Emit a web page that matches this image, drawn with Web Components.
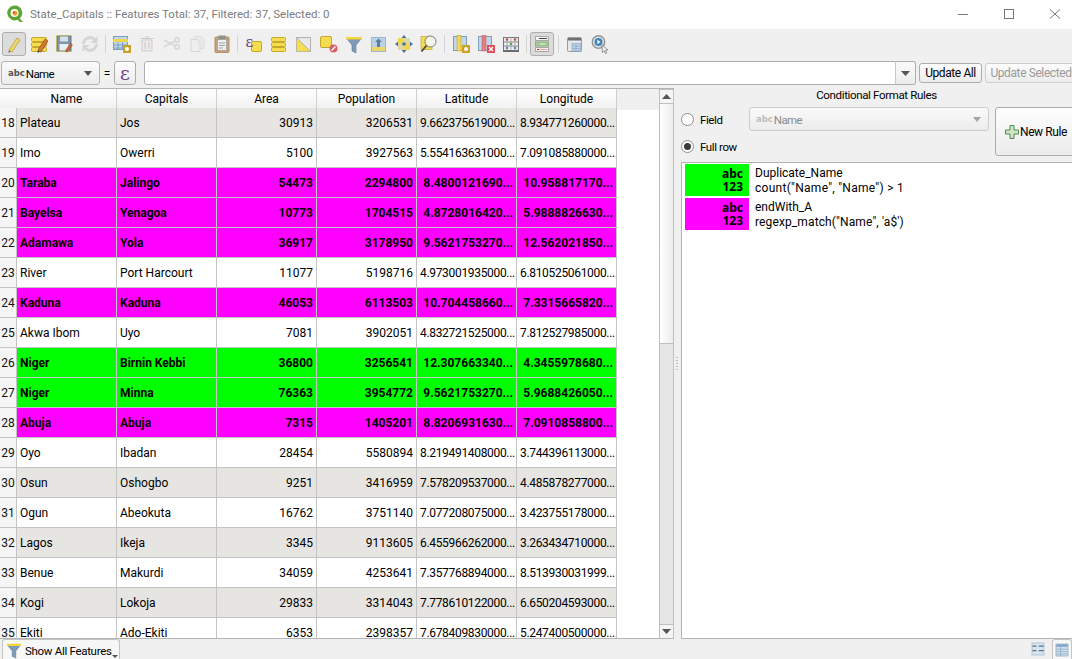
<!DOCTYPE html>
<html>
<head>
<meta charset="utf-8">
<title>State_Capitals</title>
<style>
  html, body { margin: 0; height: 100%; overflow: hidden; background: #f0f0f0; }
  body { font: 12px Roboto, "Liberation Sans", sans-serif; color: #000; }
</style>
</head>
<body>
<qgis-window>
  <title-bar></title-bar>
  <tool-bar></tool-bar>
  <filter-row></filter-row>
  <main-area>
    <attr-table></attr-table>
    <format-panel></format-panel>
  </main-area>
  <status-bar></status-bar>
</qgis-window>

<script>
// little toolbar icons, all on a 20x20 canvas
const pencil = (c = "#d9752f") => `<path d="M9 17l-1-1 7-11 3 2-7 11z" fill="${c}" stroke="#7d5230" stroke-width=".7"/><path d="M8 16l-.5 3 2-1.200z" fill="#333"/>`;
const ICONS = {
  edit: `<path d="M6 17l-1-1 8-12 3 2-8 12z" fill="#ecd568" stroke="#b7a348" stroke-width=".8"/><path d="M5 16l-.7 3 2.400-1.200z" fill="#77703a"/>`,
  multi: `<g fill="#f6dc4f" stroke="#c6a72b"><rect x="1.500" y="3.500" width="15" height="4" rx="1"/><rect x="1.500" y="8.500" width="15" height="4" rx="1"/><rect x="1.500" y="13.500" width="15" height="4" rx="1"/></g>${pencil()}`,
  save: `<rect x="1" y="1" width="16" height="17" rx="1" fill="#efe05a"/><rect x="2" y="2" width="14" height="15" fill="#7e94ad" stroke="#5d6f84" stroke-width=".7"/><rect x="5" y="2.500" width="8" height="5" fill="#d7dfe7"/><rect x="4.500" y="10" width="9" height="6.500" fill="#e9eef3"/><path d="M11 18l-.5-1.500 5-7 2 1.400-5 7z" fill="#c8643a" stroke="#7d5230" stroke-width=".5"/>`,
  reload: `<g fill="none" stroke="#d3d6d6" stroke-width="3"><path d="M3.500 10a6.500 6.500 0 0 1 11-4.500"/><path d="M16.500 10a6.500 6.500 0 0 1-11 4.500"/></g><path d="M17.500 2v7h-7zM2.500 18v-7h7z" fill="#d3d6d6"/>`,
  newfield: `<rect x="1.500" y="2.500" width="14" height="13" fill="#c3d7ea" stroke="#7f9fc0"/><rect x="1" y="5" width="15" height="3" fill="#f0d84e"/><path d="M2 11h13M2 14h13M6 8v8M10.500 8v8" stroke="#7f9fc0"/><rect x="11" y="11" width="8" height="8" fill="#c9a227"/><circle cx="15" cy="15" r="2" fill="#fff"/>`,
  trash: `<path d="M5 6h10v11H5z" fill="#ececec" stroke="#d3c8c8"/><path d="M3.500 4.500h13M8 3h4M8 8v7M12 8v7" stroke="#d3c8c8" stroke-width="1.200"/>`,
  cut: `<g fill="none" stroke="#d6d6d6" stroke-width="1.500"><path d="M2 6l11 6M2 13l11-6"/><circle cx="15" cy="6" r="2.200"/><circle cx="15" cy="13" r="2.200"/></g>`,
  copy: `<path d="M8 2.500h6l3 3v9H8z" fill="#eaeaea" stroke="#dcdcdc"/><path d="M4 5.500h6l3 3v9H4z" fill="#eeeeee" stroke="#d6d6d6"/>`,
  paste: `<rect x="3" y="3" width="14" height="15.500" rx="1" fill="#c9a37a" stroke="#b48e66"/><rect x="5.500" y="5.500" width="9" height="11" fill="#eef0f2" stroke="#8b8f93" stroke-width=".6"/><rect x="6.500" y="1.500" width="7" height="3.500" fill="#8f8f8f"/><path d="M7 9h6M7 11.500h6M7 14h4" stroke="#9aa0a5"/>`,
  selexpr: `<rect x="7.500" y="7.500" width="10" height="10" rx="1.500" fill="#f6dc4f" stroke="#c6a72b"/><text x="1.500" y="13" font-family="'DejaVu Serif',serif" font-size="15" fill="#6b3f80">ε</text>`,
  selall: `<g fill="#f6dc4f" stroke="#c6a72b"><rect x="2.500" y="3.500" width="14" height="4" rx="1"/><rect x="2.500" y="8.500" width="14" height="4" rx="1"/><rect x="2.500" y="13.500" width="14" height="4" rx="1"/></g>`,
  invert: `<rect x="2.500" y="3.500" width="14" height="14" fill="#f6dc4f" stroke="#bdb9a0"/><path d="M2.500 3.500h14v14z" fill="#e9e9e9" stroke="#b0b0b0"/>`,
  deselect: `<rect x="1.500" y="2.500" width="11" height="11" rx="1.500" fill="#f6dc4f" stroke="#c6a72b"/><circle cx="14.500" cy="14.500" r="4" fill="#d9606a"/><path d="M12.500 16.500l4-4" stroke="#fff" stroke-width="1.200"/>`,
  funnel: `<path d="M3 5h14l-5 6v8l-4-2v-6z" fill="#7d9bb6" stroke="#5e7a94" stroke-width=".6"/><rect x="2" y="3" width="16" height="2.500" fill="#f2d83e"/>`,
  movetop: `<rect x="2.500" y="3.500" width="14" height="14" fill="#bcd2e6" stroke="#9db6cc"/><rect x="3" y="13" width="13" height="4" fill="#ecd868"/><path d="M9.500 4.500l3.500 3.500h-2v5h-3v-5h-2z" fill="#5b7f9f"/>`,
  pan: `<g fill="#f0d84e"><rect x="4" y="4" width="6" height="6"/><rect x="10" y="10" width="6" height="6"/><rect x="10" y="4" width="6" height="6" fill="#dcd9a8"/><rect x="4" y="10" width="6" height="6" fill="#dcd9a8"/></g><g fill="#4d72a0"><path d="M10 1l2.500 3h-5zM10 19l2.500-3h-5zM1 10l3-2.500v5zM19 10l-3-2.500v5z"/><circle cx="10" cy="10" r="1.800"/></g>`,
  zoom: `<rect x="2" y="2.500" width="11" height="13" fill="#f3dd56" stroke="#c6a72b" stroke-width=".7"/><circle cx="11.500" cy="7.500" r="5.500" fill="#f7f7f5" fill-opacity=".9" stroke="#77797b" stroke-width="1"/><path d="M7.500 11.500l-5 6" stroke="#50453a" stroke-width="1.800"/>`,
  addfield: `<rect x="2.500" y="2.500" width="13" height="14" fill="#c3d7ea" stroke="#7f9fc0"/><rect x="6" y="1.500" width="4" height="15.500" fill="#eed85d" stroke="#c6a72b" stroke-width=".6"/><rect x="11" y="11" width="8" height="8" fill="#c9a227"/><circle cx="15" cy="15" r="2" fill="#fff"/>`,
  delfield: `<rect x="2.500" y="2.500" width="13" height="14" fill="#c3d7ea" stroke="#7f9fc0"/><rect x="6" y="1.500" width="4" height="15.500" fill="#e17f80" stroke="#c96568" stroke-width=".6"/><rect x="11" y="11" width="8" height="8" fill="#df4d58"/><path d="M13 13l4 4M17 13l-4 4" stroke="#fff" stroke-width="1.300"/>`,
  calc: `<rect x="2.500" y="3.500" width="15" height="13" fill="#eef0ef" stroke="#777"/><path d="M3 8h14M3 12h14" stroke="#8a8a8a"/><path d="M6 3v14M10 3v14M14 3v14" stroke="#9a9a9a" stroke-width=".7"/><circle cx="6" cy="5.500" r="1.300" fill="#c95050"/><circle cx="14" cy="5.500" r="1.300" fill="#c95050"/><circle cx="10" cy="10" r="1.300" fill="#59a860"/><circle cx="6" cy="14" r="1.300" fill="#5b8fc4"/><circle cx="14" cy="14" r="1.300" fill="#5b8fc4"/><rect x="2" y="16.500" width="16" height="1.500" fill="#666"/>`,
  format: `<rect x="3.500" y="2.500" width="13" height="4" fill="#f4f4f4" stroke="#a8a8a8"/><path d="M7 4.500h8" stroke="#444"/><rect x="3.500" y="8" width="13" height="4" fill="#a4cf9a" stroke="#86ad7d"/><path d="M8 10h5" stroke="#e8f4e4"/><rect x="3.500" y="13.500" width="13" height="4" fill="#f4f4f4" stroke="#a8a8a8"/><path d="M5 15.500h2" stroke="#d22"/><path d="M7 15.500h8" stroke="#e9a0a0"/>`,
  dock: `<rect x="2.500" y="3.500" width="14" height="14" rx="1" fill="#e6e8ea" stroke="#9a9ea2"/><rect x="3" y="4" width="13" height="2.500" fill="#6d6f72"/><rect x="7" y="9.500" width="9" height="7.500" fill="#bcd2e6" stroke="#8eaac4" stroke-width=".7"/><path d="M7 12h9M7 14.500h9M11 10v7" stroke="#8eaac4" stroke-width=".7"/>`,
  action: `<circle cx="8.500" cy="8" r="6.200" fill="#e4e6e8" stroke="#8f9396" stroke-width="1.400"/><circle cx="8.500" cy="8" r="4" fill="#3f83b8"/><path d="M7.300 5.800l3.300 2.200-3.300 2.200z" fill="#fff"/><path d="M12 11l6 5-2.600.3 1.300 2.700-1.300.5-1.300-2.700-1.700 1.700z" fill="#f4f4f4" stroke="#6d6d6d" stroke-width=".7"/>`,
  tableform: `<rect x="2.500" y="2.500" width="15" height="15" fill="#d8e4ef" stroke="#a9bfd4"/><path d="M3 6.500h5M3 12h5M11 6.500h6M11 12h6" stroke="#55718e" stroke-width="1.500"/>`,
  tableview: `<rect x="2.500" y="2.500" width="15" height="15" fill="#d3e2f0" stroke="#8eaac4"/><rect x="3" y="3" width="14" height="3" fill="#7fa4c8"/><path d="M3 9h14M3 12h14M3 15h14M8 6v11" stroke="#8eaac4"/>`,
};

class TitleBar extends HTMLElement {
  constructor() {
    super();
    this.attachShadow({ mode: "open" }).innerHTML = `
      <style>
        :host { display: flex; align-items: center; height: 29px; box-sizing: border-box; padding-bottom: 2px; background: #fff; color: #7d7d7d; font-size: 11.5px; overflow: hidden; }
        .logo { margin: 0 7px 0 6px; width: 17px; height: 17px; flex: none; }
        .title { flex: 1; }
        .ctrl { width: 46px; height: 27px; display: grid; place-items: center; flex: none; }
        .ctrl:last-child { margin-right: -6px; }
      </style>
      <svg class="logo" viewBox="1 1 16 16">
        <path d="M9 1.500a7 7 0 1 0 3 13.400l2 2.100h3l-3-3.400A7 7 0 0 0 9 1.500z" fill="#5da533"/>
        <circle cx="9" cy="8.500" r="3.800" fill="#fff"/>
        <circle cx="9.500" cy="8.800" r="2.300" fill="#eda02c"/>
        <circle cx="8.500" cy="8" r="1" fill="#d5432e"/>
      </svg>
      <span class="title">State_Capitals :: Features Total: 37, Filtered: 37, Selected: 0</span>
      <span class="ctrl"><svg width="12" height="12"><path d="M1 6.500h10" stroke="#777"/></svg></span>
      <span class="ctrl"><svg width="12" height="12"><rect x="1.500" y="1.500" width="9" height="9" fill="none" stroke="#777"/></svg></span>
      <span class="ctrl"><svg width="12" height="12"><path d="M1 1.500l10 9M11 1.500l-10 9" stroke="#777"/></svg></span>
    `;
  }
}

class ToolIcon extends HTMLElement {
  static get observedAttributes() { return ["name"]; }
  constructor() {
    super();
    this.attachShadow({ mode: "open" }).innerHTML = `
      <style>
        :host { display: grid; place-items: center; width: 25px; height: 25px; box-sizing: border-box; flex: none; }
        :host([active]) { background: #dcdcdc; border: 1px solid #adadad; border-radius: 3px; width: 24px; height: 24px; margin-right: 1px; }
        svg { width: 20px; height: 20px; display: block; }
      </style>
      <svg viewBox="0 0 20 20"></svg>
    `;
  }
  attributeChangedCallback(attr, _, value) {
    if (attr === "name") this.shadowRoot.querySelector("svg").innerHTML = ICONS[value] || "";
  }
}

class ToolBar extends HTMLElement {
  constructor() {
    super();
    const groups = [
      ["edit", "multi", "save", "reload"],
      ["newfield", "trash", "cut", "copy", "paste"],
      ["selexpr", "selall", "invert", "deselect", "funnel", "movetop", "pan", "zoom"],
      ["addfield", "delfield", "calc"],
      ["format"],
      ["dock", "action"],
    ];
    const html = groups.map(g =>
      g.map(n => `<tool-icon name="${n}" ${n === "edit" || n === "format" ? "active" : ""}></tool-icon>`).join("")
    ).join(`<i></i>`);
    this.attachShadow({ mode: "open" }).innerHTML = `
      <style>
        :host { display: flex; align-items: center; height: 32px; padding-left: 2px; padding-bottom: 2px; box-sizing: border-box; background: #f0f0f0; }
        i { width: 1px; height: 18px; margin: 0 3px; background: #d4d4d4; flex: none; }
      </style>
      ${html}
    `;
  }
}

class ComboBox extends HTMLElement {
  constructor() {
    super();
    this.attachShadow({ mode: "open" }).innerHTML = `
      <style>
        :host { display: flex; align-items: center; box-sizing: border-box; border: 1px solid #b4b4b4; border-radius: 3px; background: linear-gradient(#fafafa, #ececec); padding: 1px 0 0 6px; flex: none; font-size: 11.5px; letter-spacing: -.6px; }
        :host([disabled]) { color: #8a8a8a; border-color: #cdcdcd; }
        b { font: bold 8.500px "DejaVu Sans", sans-serif; letter-spacing: 0; color: #555; margin-right: 1px; position: relative; top: -1px; }
        :host([disabled]) b { color: #bdbdbd; }
        span { flex: 1; }
        svg { margin-right: 7px; }
      </style>
      <b>abc</b><span><slot></slot></span>
      <svg width="8" height="5"><path d="M0 0h8L4 5z" fill="#555" fill-opacity="${this.hasAttribute("disabled") ? ".5" : "1"}"/></svg>
    `;
  }
}

class PushButton extends HTMLElement {
  constructor() {
    super();
    this.attachShadow({ mode: "open" }).innerHTML = `
      <style>
        :host { display: flex; align-items: center; justify-content: center; box-sizing: border-box; border: 1px solid #adadad; border-radius: 3px; background: linear-gradient(#fdfdfd, #ececec); white-space: nowrap; flex: none; letter-spacing: -.4px; }
        :host([disabled]) { color: #9a9a9a; border-color: #cfcfcf; }
      </style>
      <slot></slot>
    `;
  }
}

class FilterRow extends HTMLElement {
  constructor() {
    super();
    this.attachShadow({ mode: "open" }).innerHTML = `
      <style>
        :host { display: flex; align-items: flex-start; height: 27px; background: #f0f0f0; overflow: hidden; }
        combo-box { width: 99px; height: 24px; margin-left: 1px; }
        .eq { width: 14px; text-align: center; line-height: 26px; flex: none; }
        .eps { width: 22px; height: 24px; font: 19px "DejaVu Serif", serif; color: #6b3f80; letter-spacing: 0; }
        .input { width: 750px; height: 22px; margin-left: 8px; background: #fff; border: 1px solid #adadad; border-radius: 3px 0 0 3px; flex: none; }
        .drop { width: 19px; height: 22px; border: 1px solid #adadad; border-left-color: #c8c8c8; border-radius: 0 3px 3px 0; display: grid; place-items: center; background: linear-gradient(#fafafa, #ececec); margin-left: -1px; flex: none; }
        .all { width: 63px; height: 20px; margin: 2px 3px 0 3px; }
        .sel { width: 92px; height: 20px; margin-top: 2px; }
      </style>
      <combo-box>Name</combo-box>
      <span class="eq">=</span>
      <push-button class="eps">ε</push-button>
      <div class="input"></div>
      <div class="drop"><svg width="9" height="5"><path d="M0 0h9L4.500 5z" fill="#555"/></svg></div>
      <push-button class="all">Update All</push-button>
      <push-button class="sel" disabled>Update Selected</push-button>
    `;
  }
}

class TableRow extends HTMLElement {
  static get observedAttributes() { return ["data"]; }
  constructor() {
    super();
    this.attachShadow({ mode: "open" }).innerHTML = `
      <style>
        :host { display: grid; grid-template-columns: 17px repeat(6, 100px); height: 30px; flex: none; }
        :host([tone="grey"]) div:not(.n) { background: #e7e5e2; }
        :host([tone="white"]) div:not(.n) { background: #fff; }
        :host([tone="grey"]) .long, :host([tone="white"]) .long { letter-spacing: -.32px; }
        :host([tone="magenta"]) div:not(.n) { background: #f0f; font-weight: bold; }
        :host([tone="green"]) div:not(.n) { background: #0f0; font-weight: bold; }
        div { box-sizing: border-box; border-right: 1px solid #c4c4c4; border-bottom: 1px solid #c4c4c4; padding: 0 3px; line-height: 30px; white-space: nowrap; overflow: hidden; }
        .n { background: #f5f5f5; padding: 0; text-align: center; color: #111; }
        .r { text-align: right; }
      </style>
    `;
  }
  attributeChangedCallback(attr, _, value) {
    if (attr !== "data") return;
    const cells = value.split("|");
    cells.forEach((text, i) => {
      const cell = document.createElement("div");
      cell.textContent = text;
      if (i === 0) cell.className = "n";
      if (i > 2) cell.className = "r";
      if (i > 4) cell.className = "r long";
      this.shadowRoot.appendChild(cell);
    });
  }
}

class VScroll extends HTMLElement {
  constructor() {
    super();
    this.attachShadow({ mode: "open" }).innerHTML = `
      <style>
        :host { display: flex; flex-direction: column; width: 15px; box-sizing: border-box; border: 1px solid #c0c0c0; border-bottom: 0; background: #e6e6e6; flex: none; }
        .btn { height: 13px; display: grid; place-items: center; background: #f5f5f5; flex: none; }
        .up { border-bottom: 1px solid #c0c0c0; }
        .down { border-top: 1px solid #c0c0c0; }
        .thumb { height: 239px; background: linear-gradient(90deg, #fff, #ececec); border-bottom: 1px solid #bdbdbd; flex: none; }
        .rest { flex: 1; }
      </style>
      <div class="btn up"><svg width="9" height="5"><path d="M0 5h9L4.500 0z" fill="#555"/></svg></div>
      <div class="thumb"></div>
      <div class="rest"></div>
      <div class="btn down"><svg width="9" height="5"><path d="M0 0h9L4.500 5z" fill="#555"/></svg></div>
    `;
  }
}

const ROWS = [
  "18|Plateau|Jos|30913|3206531|9.662375619000...|8.934771260000...|grey",
  "19|Imo|Owerri|5100|3927563|5.554163631000...|7.091085880000...|white",
  "20|Taraba|Jalingo|54473|2294800|8.4800121690...|10.958817170...|magenta",
  "21|Bayelsa|Yenagoa|10773|1704515|4.8728016420...|5.9888826630...|magenta",
  "22|Adamawa|Yola|36917|3178950|9.5621753270...|12.562021850...|magenta",
  "23|River|Port Harcourt|11077|5198716|4.973001935000...|6.810525061000...|white",
  "24|Kaduna|Kaduna|46053|6113503|10.704458660...|7.3315665820...|magenta",
  "25|Akwa Ibom|Uyo|7081|3902051|4.832721525000...|7.812527985000...|white",
  "26|Niger|Birnin Kebbi|36800|3256541|12.307663340...|4.3455978680...|green",
  "27|Niger|Minna|76363|3954772|9.5621753270...|5.9688426050...|green",
  "28|Abuja|Abuja|7315|1405201|8.8206931630...|7.0910858800...|magenta",
  "29|Oyo|Ibadan|28454|5580894|8.219491408000...|3.744396113000...|white",
  "30|Osun|Oshogbo|9251|3416959|7.578209537000...|4.485878277000...|grey",
  "31|Ogun|Abeokuta|16762|3751140|7.077208075000...|3.423755178000...|white",
  "32|Lagos|Ikeja|3345|9113605|6.455966262000...|3.263434710000...|grey",
  "33|Benue|Makurdi|34059|4253641|7.357768894000...|8.513930031999...|white",
  "34|Kogi|Lokoja|29833|3314043|7.778610122000...|6.650204593000...|grey",
  "35|Ekiti|Ado-Ekiti|6353|2398357|7.678409830000...|5.247400500000...|white",
];

class AttrTable extends HTMLElement {
  constructor() {
    super();
    const heads = ["Name", "Capitals", "Area", "Population", "Latitude", "Longitude"];
    this.attachShadow({ mode: "open" }).innerHTML = `
      <style>
        :host { display: flex; width: 674px; box-sizing: border-box; border-top: 1px solid #b4b4b4; border-bottom: 1px solid #b4b4b4; height: 551px; flex: none; }
        .grid { flex: 1; display: flex; flex-direction: column; overflow: hidden; background: #fff; min-width: 0; }
        .head { display: grid; grid-template-columns: 17px repeat(6, 100px) 1fr; height: 19px; flex: none; background: #f0f0f0; }
        .head span { box-sizing: border-box; border-right: 1px solid #cfcfcf; border-bottom: 1px solid #b4b4b4; text-align: center; line-height: 20px; background: linear-gradient(#fff, #f1f1f1); }
        .head span.corner { border-right: 0; }
        .head span.fill { border: 0; background: #f0f0f0; }
        .rows { flex: 1; overflow: hidden; }
        .inner { display: flex; flex-direction: column; width: 617px; }
      </style>
      <div class="grid">
        <div class="head"><span class="corner"></span>${heads.map(h => `<span>${h}</span>`).join("")}<span class="fill"></span></div>
        <div class="rows"><div class="inner"></div></div>
      </div>
      <v-scroll></v-scroll>
    `;
    const inner = this.shadowRoot.querySelector(".inner");
    ROWS.forEach(line => {
      const parts = line.split("|");
      const row = document.createElement("table-row");
      row.setAttribute("tone", parts.pop());
      row.setAttribute("data", parts.join("|"));
      inner.appendChild(row);
    });
  }
}

class RadioOption extends HTMLElement {
  constructor() {
    super();
    this.attachShadow({ mode: "open" }).innerHTML = `
      <style>
        :host { display: flex; align-items: center; gap: 6px; height: 14px; font-size: 11.5px; letter-spacing: -.4px; }
        i { width: 13px; height: 13px; box-sizing: border-box; border: 1px solid #8e8e8e; border-radius: 50%; background: #fff; display: grid; place-items: center; flex: none; }
        :host([checked]) i::after { content: ""; width: 7px; height: 7px; border-radius: 50%; background: #3a3a3a; }
        span { position: relative; top: 1px; }
      </style>
      <i></i><span><slot></slot></span>
    `;
  }
}

class RuleItem extends HTMLElement {
  constructor() {
    super();
    this.attachShadow({ mode: "open" }).innerHTML = `
      <style>
        :host { display: flex; align-items: center; gap: 6px; height: 32px; margin-bottom: 2px; }
        .swatch { width: 64px; height: 32px; background: var(--swatch); font: bold 12px/13px "Noto Sans", sans-serif; text-align: right; padding: 3px 6px 0 0; box-sizing: border-box; flex: none; }
        .text { line-height: 15px; white-space: nowrap; padding-top: 2px; }
      </style>
      <div class="swatch">abc<br>123</div>
      <div class="text"><slot name="rule-name"></slot><br><slot name="rule-expr"></slot></div>
    `;
  }
}

class FormatPanel extends HTMLElement {
  constructor() {
    super();
    this.attachShadow({ mode: "open" }).innerHTML = `
      <style>
        :host { display: flex; flex-direction: column; flex: 1; min-width: 0; overflow: hidden; margin-left: 7px; height: 551px; }
        .caption { height: 19px; text-align: center; line-height: 15px; flex: none; font-size: 11.5px; letter-spacing: -.35px; }
        .controls { display: flex; align-items: flex-start; height: 55px; flex: none; }
        .radios { width: 68px; display: flex; flex-direction: column; gap: 13px; padding-top: 5px; flex: none; }
        combo-box { width: 240px; height: 24px; }
        push-button { width: 90px; height: 49px; margin-left: 6px; gap: 1px; justify-content: flex-start; padding-left: 9px; }
        .list { flex: 1; border: 1px solid #b4b4b4; border-right: 0; background: #fff; padding: 1px 0 0 3px; }
        svg { display: block; flex: none; }
      </style>
      <div class="caption">Conditional Format Rules</div>
      <div class="controls">
        <div class="radios">
          <radio-option>Field</radio-option>
          <radio-option checked>Full row</radio-option>
        </div>
        <combo-box disabled>Name</combo-box>
        <push-button>
          <svg width="14" height="14" viewBox="0 0 14 14"><path d="M5 .5h4v4.500h4.500v4H9v4.500H5V9H.5V5H5z" fill="#cfe6c6" stroke="#4f8a4f"/></svg>
          <span>New Rule</span>
        </push-button>
      </div>
      <div class="list">
        <rule-item style="--swatch:#0f0"><span slot="rule-name">Duplicate_Name</span><span slot="rule-expr" style="letter-spacing:.28px">count("Name", "Name") &gt; 1</span></rule-item>
        <rule-item style="--swatch:#f0f"><span slot="rule-name">endWith_A</span><span slot="rule-expr" style="letter-spacing:.12px">regexp_match("Name", 'a$')</span></rule-item>
      </div>
    `;
  }
}

class MainArea extends HTMLElement {
  constructor() {
    super();
    this.attachShadow({ mode: "open" }).innerHTML = `
      <style>
        :host { display: flex; height: 551px; position: relative; flex: none; }
        .grip { position: absolute; left: 676px; top: 269px; width: 2px; height: 15px; background: repeating-linear-gradient(#bbb 0 1px, transparent 1px 3px); }
      </style>
      <slot></slot>
      <div class="grip"></div>
    `;
  }
}

class StatusBar extends HTMLElement {
  constructor() {
    super();
    this.attachShadow({ mode: "open" }).innerHTML = `
      <style>
        :host { display: flex; align-items: flex-end; height: 20px; background: #f0f0f0; padding-left: 2px; position: relative; }
        .show { display: flex; align-items: center; width: 118px; height: 20px; box-sizing: border-box; border: 1px solid #c4c4c4; border-bottom: 0; border-radius: 3px 3px 0 0; background: #f7f7f7; position: relative; padding-left: 2px; gap: 2px; white-space: nowrap; font-size: 11.5px; letter-spacing: -.3px; flex: none; }
        .show svg { width: 18px; height: 18px; flex: none; }
        .show span { position: relative; top: 1px; }
        .show .arrow { position: absolute; right: 1px; bottom: 1px; width: 6px; height: 3px; }
        .spacer { flex: 1; }
        .tab { width: 20px; height: 20px; display: grid; place-items: center; box-sizing: border-box; }
        .tab svg { width: 16px; height: 16px; }
        .tab.on { border: 1px solid #c4c4c4; border-bottom: 0; border-radius: 3px 3px 0 0; background: #f7f7f7; margin-left: 4px; }
      </style>
      <div class="show">
        <svg viewBox="0 0 20 20">${ICONS.funnel}</svg>
        <span>Show All Features</span>
        <svg class="arrow"><path d="M0 0h6L3 3z" fill="#555"/></svg>
      </div>
      <div class="spacer"></div>
      <div class="tab"><svg viewBox="0 0 20 20">${ICONS.tableform}</svg></div>
      <div class="tab on"><svg viewBox="0 0 20 20">${ICONS.tableview}</svg></div>
    `;
  }
}

class QgisWindow extends HTMLElement {
  constructor() {
    super();
    this.attachShadow({ mode: "open" }).innerHTML = `
      <style>
        :host { display: flex; flex-direction: column; width: 1072px; height: 659px; overflow: hidden; background: #f0f0f0; }
      </style>
      <slot></slot>
    `;
  }
}

customElements.define("tool-icon", ToolIcon);
customElements.define("title-bar", TitleBar);
customElements.define("tool-bar", ToolBar);
customElements.define("combo-box", ComboBox);
customElements.define("push-button", PushButton);
customElements.define("filter-row", FilterRow);
customElements.define("table-row", TableRow);
customElements.define("v-scroll", VScroll);
customElements.define("attr-table", AttrTable);
customElements.define("radio-option", RadioOption);
customElements.define("rule-item", RuleItem);
customElements.define("format-panel", FormatPanel);
customElements.define("main-area", MainArea);
customElements.define("status-bar", StatusBar);
customElements.define("qgis-window", QgisWindow);
</script>
</body>
</html>
